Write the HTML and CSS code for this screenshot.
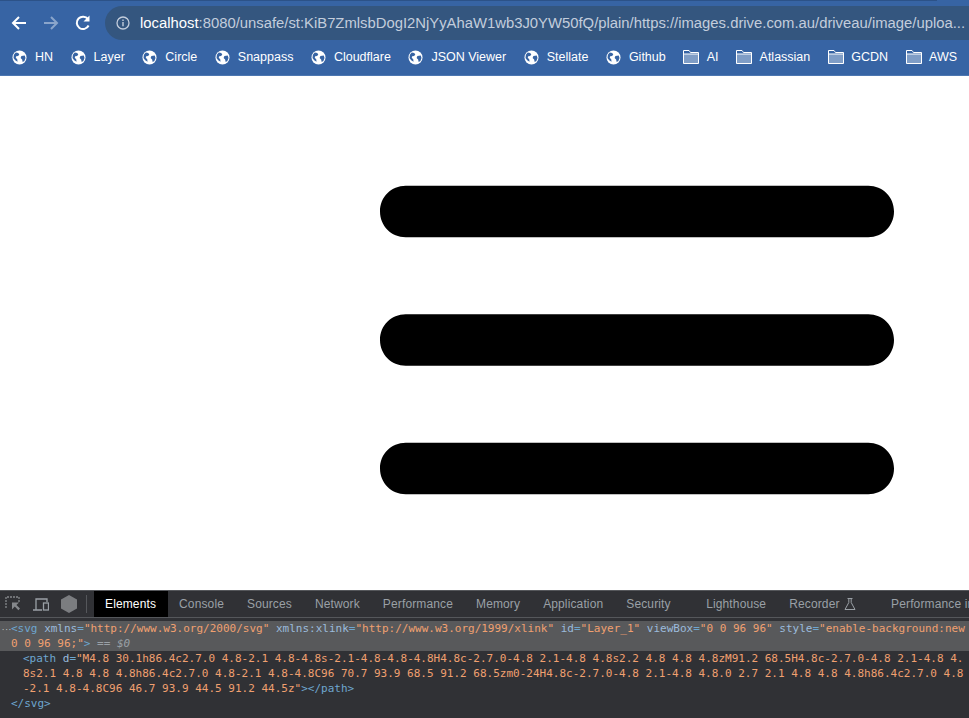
FILE: index.html
```html
<!DOCTYPE html>
<html lang="en">
<head>
  <meta charset="UTF-8">
  <title>Browser window</title>
  <link rel="stylesheet" href="styles.css">
</head>
<body>
  <svg class="defs" width="0" height="0">
    <symbol id="globe" viewBox="0 0 16 16">
      <circle cx="8" cy="8" r="7.500" fill="#fff"/>
      <path d="M4 2.600l2.600.6 1.200 1.500-1.300 1.600-2 .3-.5 1.600 1.600 1.600.3 2.600L3.400 11 1.600 8.400 2 5z" fill="#3764a4"/>
      <path d="M10 6.400l3.600-.6.8 2.600-1.200 3.200-1.800 1.200-.6-2.600-1.600-1.800z" fill="#3764a4"/>
    </symbol>
    <symbol id="folder" viewBox="0 0 16 14">
      <path d="M.5 13.500V.5h5.500l1.500 2h8v11z" fill="#7f9dc6" stroke="#fff"/>
      <path d="M1 1h4.800l1.500 2H15v1H1z" fill="#3764a4"/>
      <path d="M.5 4h15" stroke="#fff" fill="none"/>
    </symbol>
  </svg>

  <header class="toolbar">
    <div class="tabstrip-edge"></div>
    <nav class="nav-row">
      <svg class="nav-icon" viewBox="0 0 18 18"><path d="M16 9H3M9 3L3 9l6 6" fill="none" stroke="#fff" stroke-width="2"/></svg>
      <svg class="nav-icon" viewBox="0 0 18 18"><path d="M2 9h13M9 3l6 6-6 6" fill="none" stroke="#8aa5cb" stroke-width="2"/></svg>
      <svg class="nav-icon" viewBox="0 0 18 18"><path d="M14.600 11.500A6.200 6.200 0 1 1 14 5.200" fill="none" stroke="#fff" stroke-width="2"/><path d="M15.500 1.500v6h-6z" fill="#fff"/></svg>
      <div class="omnibox">
        <svg class="info-icon" viewBox="0 0 14 14"><circle cx="7" cy="7" r="6" fill="none" stroke="#c3cddc" stroke-width="1.300"/><path d="M7 6v4.200M7 3.500v1.400" stroke="#c3cddc" stroke-width="1.400"/></svg>
        <span class="url"><b>localhost</b>:8080/unsafe/st:KiB7ZmlsbDogI2NjYyAhaW1wb3J0YW50fQ/plain/https://images.drive.com.au/driveau/image/uploa...</span>
      </div>
    </nav>
    <div class="bookmarks">
      <a class="mark"><svg class="globe"><use href="#globe"/></svg>HN</a>
      <a class="mark"><svg class="globe"><use href="#globe"/></svg>Layer</a>
      <a class="mark"><svg class="globe"><use href="#globe"/></svg>Circle</a>
      <a class="mark"><svg class="globe"><use href="#globe"/></svg>Snappass</a>
      <a class="mark"><svg class="globe"><use href="#globe"/></svg>Cloudflare</a>
      <a class="mark"><svg class="globe"><use href="#globe"/></svg>JSON Viewer</a>
      <a class="mark"><svg class="globe"><use href="#globe"/></svg>Stellate</a>
      <a class="mark"><svg class="globe"><use href="#globe"/></svg>Github</a>
      <a class="mark"><svg class="folder"><use href="#folder"/></svg>AI</a>
      <a class="mark"><svg class="folder"><use href="#folder"/></svg>Atlassian</a>
      <a class="mark"><svg class="folder"><use href="#folder"/></svg>GCDN</a>
      <a class="mark"><svg class="folder"><use href="#folder"/></svg>AWS</a>
    </div>
  </header>

  <main class="page">
    <svg class="burger" viewBox="0 0 96 96">
      <path d="M4.800 30.100h86.400c2.700 0 4.800-2.100 4.800-4.800s-2.100-4.800-4.800-4.800H4.800c-2.700 0-4.800 2.100-4.800 4.800s2.100 4.800 4.800 4.800zM91.200 68.500H4.800c-2.700 0-4.800 2.100-4.800 4.800s2.100 4.800 4.800 4.800h86.400c2.700 0 4.800-2.100 4.800-4.800s-2.100-4.800-4.800-4.800zm0-24H4.800c-2.700 0-4.800 2.100-4.800 4.800 0 2.700 2.100 4.800 4.800 4.800h86.400c2.700 0 4.800-2.100 4.800-4.800 0-2.700-2.100-4.800-4.800-4.800z"/>
    </svg>
  </main>

  <section class="devtools">
    <div class="tabs">
      <svg class="tool-icon" viewBox="0 0 16 16"><path d="M1 12V1h13v5" fill="none" stroke="#85888c" stroke-width="1.300" stroke-dasharray="2 1"/><path d="M7 6.500h7l-2.600 2.500 3.600 3.600-1.600 1.600-3.600-3.600L7 13.500z" fill="#85888c"/></svg>
      <svg class="tool-icon" viewBox="0 0 16 16"><path d="M0 14h9M3 14V3h11v3" fill="none" stroke="#9aa0a6" stroke-width="1.300"/><rect x="10.500" y="7" width="5" height="7" fill="none" stroke="#9aa0a6" stroke-width="1.300"/></svg>
      <svg class="hex-icon" viewBox="0 0 16 18"><path d="M8 0l8 4.500v9L8 18l-8-4.500v-9z" fill="#7b7d80"/></svg>
      <span class="tab-sep"></span>
      <span class="tab active">Elements</span>
      <span class="tab">Console</span>
      <span class="tab">Sources</span>
      <span class="tab">Network</span>
      <span class="tab">Performance</span>
      <span class="tab">Memory</span>
      <span class="tab">Application</span>
      <span class="tab">Security</span>
      <span class="tab tab-gap">Lighthouse</span>
      <span class="tab">Recorder <svg class="flask" viewBox="0 0 12 12"><path d="M3.500 .5h5M4.800 .5v4L1 11.500h10L7.200 4.500v-4" fill="none" stroke="#9aa0a6"/></svg></span>
      <span class="tab tab-gap">Performance insights</span>
    </div>
    <div class="dom">
      <div class="dom-selected">
        <div class="line"><span class="dots">···</span><span class="tag">&lt;svg</span> <span class="attr">xmlns</span><span class="tag">=</span><span class="val">"http://www.w3.org/2000/svg"</span> <span class="attr">xmlns:xlink</span><span class="tag">=</span><span class="val">"http://www.w3.org/1999/xlink"</span> <span class="attr">id</span><span class="tag">=</span><span class="val">"Layer_1"</span> <span class="attr">viewBox</span><span class="tag">=</span><span class="val">"0 0 96 96"</span> <span class="attr">style</span><span class="tag">=</span><span class="val">"enable-background:new</span></div>
        <div class="line"><span class="val">0 0 96 96;"</span><span class="tag">&gt;</span> <span class="eq">== <i>$0</i></span></div>
      </div>
      <div class="line indent"><span class="tag">&lt;path</span> <span class="attr">d</span><span class="tag">=</span><span class="val">"M4.8 30.1h86.4c2.7.0 4.8-2.1 4.8-4.8s-2.1-4.8-4.8-4.8H4.8c-2.7.0-4.8 2.1-4.8 4.8s2.2 4.8 4.8 4.8zM91.2 68.5H4.8c-2.7.0-4.8 2.1-4.8 4.</span></div>
      <div class="line indent"><span class="val">8s2.1 4.8 4.8 4.8h86.4c2.7.0 4.8-2.1 4.8-4.8C96 70.7 93.9 68.5 91.2 68.5zm0-24H4.8c-2.7.0-4.8 2.1-4.8 4.8.0 2.7 2.1 4.8 4.8 4.8h86.4c2.7.0 4.8</span></div>
      <div class="line indent"><span class="val">-2.1 4.8-4.8C96 46.7 93.9 44.5 91.2 44.5z"</span><span class="tag">&gt;&lt;/path&gt;</span></div>
      <div class="line"><span class="tag close">&lt;/svg&gt;</span></div>
    </div>
  </section>
</body>
</html>
```

FILE: styles.css
```css
* {
  margin: 0;
  padding: 0;
  box-sizing: border-box;
}

html, body {
  height: 718px;
  overflow: hidden;
}

body {
  background: #ffffff;
  font-family: "Liberation Sans", sans-serif;
}

.defs {
  position: absolute;
}

/* Browser toolbar */
.toolbar {
  height: 76px;
  background: #3764a4;
  border-bottom: 1px solid #4d77b1;
  color: #fff;
}

.tabstrip-edge {
  width: 937px;
  height: 1px;
  background: #2c5288;
}

.nav-row {
  display: flex;
  align-items: center;
  height: 38px;
  padding-top: 5px;
}

.nav-icon {
  width: 18px;
  height: 18px;
  margin-left: 10px;
  margin-right: 4px;
  flex-shrink: 0;
}

.omnibox {
  flex: 1;
  height: 34px;
  margin-left: 9px;
  display: flex;
  align-items: center;
  background: #34567f;
  border-radius: 17px 0 0 17px;
  padding-left: 11px;
  white-space: nowrap;
  overflow: hidden;
}

.info-icon {
  width: 14px;
  height: 14px;
  margin-right: 10px;
  flex-shrink: 0;
}

.url {
  font-size: 14.840px;
  color: #c3cddc;
}

.url b {
  font-weight: normal;
  color: #fff;
}

.bookmarks {
  display: flex;
  align-items: center;
  height: 36px;
  padding-left: 12px;
  gap: 17.500px;
  white-space: nowrap;
}

.mark {
  display: flex;
  align-items: center;
  font-size: 12.500px;
  color: #fff;
}

.globe {
  width: 15px;
  height: 15px;
  margin-right: 8px;
}

.folder {
  width: 16px;
  height: 14px;
  margin-right: 7.500px;
}

/* Page being inspected */
.page {
  height: 514px;
  display: flex;
  justify-content: flex-end;
  padding-right: 75px;
  background: #fff;
}

.burger {
  width: 514px;
  height: 514px;
}

/* Devtools panel */
.devtools {
  height: 128px;
  background: #303135;
  border-top: 1px solid #55575b;
  overflow: hidden;
}

.tabs {
  display: flex;
  align-items: center;
  height: 27px;
  border-bottom: 1px solid #55575b;
  font-size: 12px;
  letter-spacing: .13px;
  color: #9aa0a6;
  white-space: nowrap;
  overflow: hidden;
}

.tabs > * {
  flex-shrink: 0;
}

.tool-icon {
  width: 16px;
  height: 16px;
  margin-left: 5px;
  margin-right: 7px;
}

.hex-icon {
  width: 16px;
  height: 18px;
  margin-left: 5px;
}

.tab-sep {
  width: 1px;
  height: 18px;
  background: #55575b;
  margin: 0 6.500px 0 9px;
}

.tab {
  display: flex;
  align-items: center;
  gap: 4px;
  padding: 0 11.500px;
  height: 26px;
}

.tab.active {
  background: #000;
  color: #fff;
}

.tab-gap {
  margin-left: 12.500px;
}

.flask {
  width: 12px;
  height: 12px;
}

.dom {
  padding-top: 3px;
  font-family: "DejaVu Sans Mono", monospace;
  font-size: 11px;
  line-height: 15px;
}

.dom-selected {
  background: #58595b;
}

.line {
  height: 15px;
  padding-left: 11px;
  white-space: nowrap;
}

.indent {
  padding-left: 23px;
}

.dots {
  display: inline-block;
  width: 10px;
  margin-left: -10px;
  font-size: 7px;
  line-height: 7px;
  letter-spacing: -.8px;
  color: #c4c7c5;
}

.tag {
  color: #6ea6cf;
}

.attr {
  color: #9bbbdc;
}

.val {
  color: #f0a070;
}

.eq {
  color: #9aa0a6;
}
```
